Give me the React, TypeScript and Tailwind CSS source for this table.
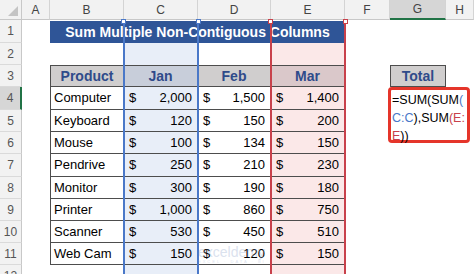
import React from 'react';

const letters = ['A', 'B', 'C', 'D', 'E', 'F', 'G', 'H'];

const products = [
  ['Computer', '2,000', '1,500', '1,400'],
  ['Keyboard', '120', '150', '200'],
  ['Mouse', '100', '134', '150'],
  ['Pendrive', '250', '210', '230'],
  ['Monitor', '300', '190', '180'],
  ['Printer', '1,000', '860', '750'],
  ['Scanner', '530', '450', '510'],
  ['Web Cam', '150', '120', '150'],
];

const RowHead = ({ n, active }: { n: number; active?: boolean }) => (
  <div
    className={`flex items-center justify-center border-b border-[#dadada] text-[12px] text-[#555] ${
      active ? 'bg-[#d6d6d6] border-r-2 border-r-[#217346]' : 'bg-[#f2f2f2] border-r border-r-[#c8c8c8]'
    }`}
  >
    {n}
  </div>
);

const Money = ({ value, tint }: { value: string; tint: string }) => (
  <div className={`flex items-center justify-between px-[5px] border-r border-b border-[#4d4d4d] ${tint}`}>
    <span>$</span>
    <span>{value}</span>
  </div>
);

const Empty = ({ tint = '' }: { tint?: string }) => <div className={tint} />;

const App = () => {
  return (
    <div className="relative w-[474px] h-[274px] overflow-hidden bg-white font-['Liberation_Sans',Arial,sans-serif] text-[13px] text-black">
      <div className="grid grid-cols-[22px_28px_74px_74px_73px_74px_45px_56px_28px] grid-rows-[20px_23px_22px_22px_23px_22px_22px_23px_22px_22px_22px_22px_22px]">
        {/* column headers */}
        <div className="relative bg-[#f2f2f2] border-r border-b border-[#c8c8c8]">
          <svg className="absolute right-[3px] bottom-[3px]" width="10" height="10" viewBox="0 0 10 10">
            <polygon points="10,0 10,10 0,10" fill="#c4c4c4" />
          </svg>
        </div>
        {letters.map((l) => (
          <div
            key={l}
            className={`flex items-center justify-center text-[12px] text-[#444] border-r border-[#d4d4d4] ${
              l === 'G' ? 'bg-[#d6d6d6] border-b-2 border-b-[#217346]' : 'bg-[#f2f2f2] border-b border-b-[#c8c8c8]'
            }`}
          >
            {l}
          </div>
        ))}

        {/* row 1 */}
        <RowHead n={1} />
        <Empty />
        <div className="col-span-4 mt-[1px] flex items-center justify-center bg-[#2f5597] text-[14px] font-bold text-white">
          Sum Multiple Non-Contiguous Columns
        </div>
        <Empty />
        <Empty />
        <Empty />

        {/* row 2 */}
        <RowHead n={2} />
        <Empty />
        <Empty />
        <Empty tint="bg-[#e8eef8]" />
        <Empty />
        <Empty tint="bg-[#fbe8e8]" />
        <Empty />
        <Empty />
        <Empty />

        {/* row 3 */}
        <RowHead n={3} />
        <Empty />
        <div className="flex items-center justify-center border border-[#4d4d4d] bg-[#d0cece] text-[14px] font-bold text-[#2f4b8a]">
          Product
        </div>
        <div className="flex items-center justify-center border-y border-r border-[#4d4d4d] bg-[#c8ceda] text-[14px] font-bold text-[#2f4b8a]">
          Jan
        </div>
        <div className="flex items-center justify-center border-y border-r border-[#4d4d4d] bg-[#d0cece] text-[14px] font-bold text-[#2f4b8a]">
          Feb
        </div>
        <div className="flex items-center justify-center border-y border-r border-[#4d4d4d] bg-[#dac8ca] text-[14px] font-bold text-[#2f4b8a]">
          Mar
        </div>
        <Empty />
        <div className="flex items-center justify-center border border-[#4d4d4d] bg-[#d0cece] text-[14px] font-bold text-[#2f4b8a]">
          Total
        </div>
        <Empty />

        {/* data rows */}
        {products.map(([name, jan, feb, mar], i) => (
          <React.Fragment key={name}>
            <RowHead n={i + 4} active={i === 0} />
            <Empty />
            <div className="flex items-center pl-[3px] border-x border-b border-[#4d4d4d]">{name}</div>
            <Money value={jan} tint="bg-[#e8eef8]" />
            <Money value={feb} tint="" />
            <Money value={mar} tint="bg-[#fbe8e8]" />
            <Empty />
            <Empty />
            <Empty />
          </React.Fragment>
        ))}

        {/* row 12 */}
        <RowHead n={12} />
        <Empty />
        <Empty />
        <Empty tint="bg-[#e8eef8]" />
        <Empty />
        <Empty tint="bg-[#fbe8e8]" />
        <Empty />
        <Empty />
        <Empty />
      </div>

      {/* column selections */}
      <div className="absolute left-[123px] top-[20px] bottom-0 w-[76px] border-x-2 border-[#4a78c8]" />
      <div className="absolute left-[121px] top-[19px] w-[5px] h-[5px] bg-white border border-[#4a78c8]" />
      <div className="absolute left-[196px] top-[19px] w-[5px] h-[5px] bg-white border border-[#4a78c8]" />
      <div className="absolute left-[270px] top-[20px] bottom-0 w-[76px] border-x-2 border-[#c8414b]" />
      <div className="absolute left-[268px] top-[19px] w-[5px] h-[5px] bg-white border border-[#c8414b]" />
      <div className="absolute left-[343px] top-[19px] w-[5px] h-[5px] bg-white border border-[#c8414b]" />

      {/* watermark */}
      <div className="absolute left-[198px] top-[245px] flex flex-col items-start opacity-30">
        <span className="text-[14px] leading-[14px] text-[#8aa0c8]">exceldemy</span>
        <span className="text-[4px] leading-[5px] tracking-[2px] text-[#8aa0c8]">EXCEL · DATA · BI</span>
      </div>

      {/* formula in edit */}
      <div className="absolute left-[388px] top-[87px] w-[82px] h-[56px] rounded-[4px] border-[3px] border-[#e5352a] bg-white pl-[1px] pt-[1px] text-[12.5px] leading-[18px] whitespace-nowrap">
        <div>
          =SUM(SUM<span className="text-[#4a78c8]">(</span>
        </div>
        <div>
          <span className="text-[#4a78c8]">C:C</span>),SUM<span className="text-[#c8414b]">(E:</span>
        </div>
        <div>
          <span className="text-[#c8414b]">E</span>))
        </div>
      </div>
    </div>
  );
};

export default App;
